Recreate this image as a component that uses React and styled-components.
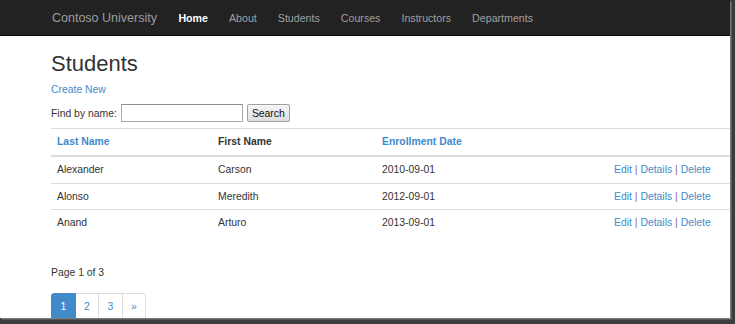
import React from 'react';
import styled, { createGlobalStyle } from 'styled-components';

const GlobalStyle = createGlobalStyle`
  html, body {
    margin: 0;
    padding: 0;
    background: #ffffff;
  }
  body {
    font-family: "Liberation Sans", Arial, sans-serif;
    font-size: 10.4px;
    color: #333333;
  }
`;

const students = [
  { last: 'Alexander', first: 'Carson', date: '2010-09-01' },
  { last: 'Alonso', first: 'Meredith', date: '2012-09-01' },
  { last: 'Anand', first: 'Arturo', date: '2013-09-01' },
];

const navLinks = ['Home', 'About', 'Students', 'Courses', 'Instructors', 'Departments'];

function App() {
  return (
    <>
      <GlobalStyle />
      <Frame>
        <Page>
          <Navbar>
            <Brand href="#">Contoso University</Brand>
            <NavList>
              {navLinks.map((link, i) => (
                <NavItem key={link} $active={i === 0}>{link}</NavItem>
              ))}
            </NavList>
          </Navbar>

          <Container>
            <Title>Students</Title>
            <Para><Link href="#">Create New</Link></Para>
            <SearchForm>
              <span>Find by name:</span>
              <SearchInput type="text" />
              <SearchButton type="button">Search</SearchButton>
            </SearchForm>

            <Table>
              <colgroup>
                <col style={{ width: 161 }} />
                <col style={{ width: 164 }} />
                <col style={{ width: 232 }} />
                <col />
              </colgroup>
              <thead>
                <tr>
                  <Th><Link href="#">Last Name</Link></Th>
                  <Th>First Name</Th>
                  <Th><Link href="#">Enrollment Date</Link></Th>
                  <Th />
                </tr>
              </thead>
              <tbody>
                {students.map((s) => (
                  <tr key={s.last}>
                    <Td>{s.last}</Td>
                    <Td>{s.first}</Td>
                    <Td>{s.date}</Td>
                    <Td>
                      <Link href="#">Edit</Link> <Sep>|</Sep>{' '}
                      <Link href="#">Details</Link> <Sep>|</Sep>{' '}
                      <Link href="#">Delete</Link>
                    </Td>
                  </tr>
                ))}
              </tbody>
            </Table>

            <PageInfo>Page 1 of 3</PageInfo>

            <Pagination>
              <PageItem $active $first>1</PageItem>
              <PageItem>2</PageItem>
              <PageItem>3</PageItem>
              <PageItem $last>»</PageItem>
            </Pagination>
          </Container>
        </Page>
      </Frame>
    </>
  );
}

const Frame = styled.div`
  width: 735px;
  height: 324px;
  background: #3c3c3c;
  overflow: hidden;
`;

const Page = styled.div`
  width: 730px;
  height: 318px;
  background: #ffffff;
  overflow: hidden;
  box-shadow: 1px 1px 0 #7a7a7a, 2px 2px 0 #5a5a5a;
`;

const Navbar = styled.nav`
  display: flex;
  align-items: center;
  height: 36px;
  background: #222222;
  border-bottom: 1px solid #080808;
  padding-left: 52px;
  box-sizing: border-box;
`;

const Brand = styled.a`
  color: #9d9d9d;
  font-size: 12.5px;
  text-decoration: none;
  margin-right: 11px;
`;

const NavList = styled.ul`
  display: flex;
  list-style: none;
  margin: 0;
  padding: 0;
`;

const NavItem = styled.li`
  padding: 0 10.5px;
  font-size: 10.65px;
  color: ${(p) => (p.$active ? '#ffffff' : '#a0a0a0')};
  font-weight: ${(p) => (p.$active ? 'bold' : 'normal')};
`;

const Container = styled.div`
  padding: 0 0 0 51px;
`;

const Title = styled.h2`
  margin: 16px 0 6px;
  font-size: 22px;
  line-height: 24px;
  font-weight: normal;
  color: #333333;
`;

const Para = styled.p`
  margin: 0 0 7px;
  line-height: 15px;
`;

const Link = styled.a`
  color: #428bca;
  text-decoration: none;
`;

const SearchForm = styled.div`
  display: flex;
  align-items: center;
  height: 18px;
  margin-bottom: 6px;

  span {
    margin-right: 4px;
  }
`;

const SearchInput = styled.input`
  width: 122px;
  height: 18px;
  box-sizing: border-box;
  border: 1px solid #a9a9a9;
  border-top-color: #8f8f8f;
  padding: 0 2px;
  margin: 0 4px 0 0;
  font-size: 10.4px;
`;

const SearchButton = styled.button`
  height: 18px;
  width: 43px;
  padding: 0;
  font-family: "Liberation Sans", Arial, sans-serif;
  font-size: 10.4px;
  color: #111111;
  background: linear-gradient(#f6f6f6, #dedede);
  border: 1px solid #a0a0a0;
  border-radius: 2px;
`;

const Table = styled.table`
  width: 720px;
  border-collapse: collapse;
  border-spacing: 0;
  table-layout: fixed;
`;

const Th = styled.th`
  text-align: left;
  font-weight: bold;
  padding: 5px 6px;
  line-height: 16px;
  border-top: 1px solid #dddddd;
  border-bottom: 2px solid #dddddd;
  white-space: nowrap;
`;

const Td = styled.td`
  padding: 5px 6px;
  line-height: 15.5px;
  border-top: 1px solid #dddddd;
  white-space: nowrap;

  tbody tr:first-child & {
    border-top: 0;
  }
`;

const Sep = styled.span`
  color: #8a6a90;
`;

const PageInfo = styled.div`
  margin-top: 29px;
  line-height: 15px;
`;

const Pagination = styled.ul`
  display: flex;
  list-style: none;
  margin: 13px 0 0;
  padding: 0;
`;

const PageItem = styled.li`
  padding: 5px 8.4px;
  line-height: 15px;
  font-size: 10.4px;
  border: 1px solid ${(p) => (p.$active ? '#428bca' : '#dddddd')};
  margin-left: ${(p) => (p.$first ? '0' : '-1px')};
  background: ${(p) => (p.$active ? '#428bca' : '#ffffff')};
  color: ${(p) => (p.$active ? '#ffffff' : '#428bca')};
  border-radius: ${(p) => (p.$first ? '3px 0 0 3px' : p.$last ? '0 3px 3px 0' : '0')};
  position: relative;
  z-index: ${(p) => (p.$active ? 1 : 0)};
`;

export default App;
